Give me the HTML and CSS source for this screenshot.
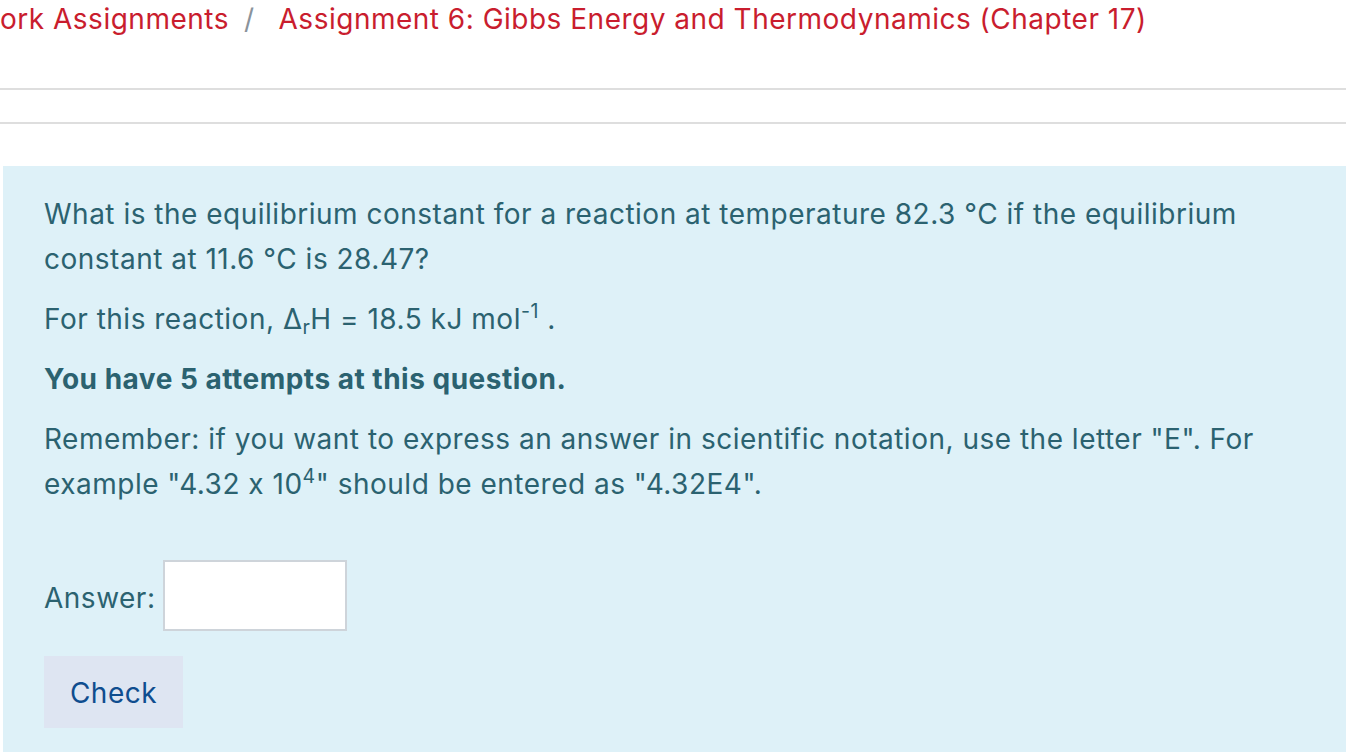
FILE: index.html
```html
<!DOCTYPE html>
<html>
<head>
<meta charset="utf-8">
<link rel="stylesheet" href="styles.css">
</head>
<body>
<nav class="breadcrumb">
  <a class="crumb" href="#">ork Assignments</a>
  <span class="sep">/</span>
  <a class="crumb" href="#">Assignment 6: Gibbs Energy and Thermodynamics (Chapter 17)</a>
</nav>
<div class="rules">
  <div class="rule"></div>
  <div class="rule"></div>
</div>
<div class="formulation">
  <p>What is the equilibrium constant for a reaction at temperature 82.3 °C if the equilibrium constant at 11.6 °C is 28.47?</p>
  <p>For this reaction, Δ<sub>r</sub>H = 18.5 kJ mol<sup>-1</sup> .</p>
  <p class="bold">You have 5 attempts at this question.</p>
  <p>Remember: if you want to express an answer in scientific notation, use the letter "E". For example "4.32 x 10<sup>4</sup>" should be entered as "4.32E4".</p>
  <div class="answer">
    <label for="ans">Answer:</label>
    <input id="ans" type="text">
  </div>
  <button class="check">Check</button>
</div>
</body>
</html>
```

FILE: styles.css
```css
html, body {
  margin: 0;
  padding: 0;
  background: #ffffff;
}
body {
  font-family: Inter, "Liberation Sans", sans-serif;
  font-size: 28px;
  letter-spacing: 0.5px;
  font-feature-settings: "calt" 0;
  overflow: hidden;
  height: 752px;
}
.breadcrumb {
  display: flex;
  align-items: center;
  height: 37px;
  white-space: nowrap;
}
.crumb {
  color: #c91d2e;
  text-decoration: none;
}
.sep {
  color: #8a939b;
  margin: 0 24px 0 15px;
}
.rules {
  padding-top: 51px;
}
.rule {
  height: 2px;
  background: #dedede;
}
.rule + .rule {
  margin-top: 32px;
}
.formulation {
  margin: 42px 0 0 3px;
  background: #def1f8;
  color: #2b6270;
  padding: 26px 41px 24px;
  height: 600px;
}
.formulation p {
  margin: 0 0 15px;
  line-height: 45px;
}
.formulation .bold {
  font-weight: 700;
}
sub, sup {
  font-size: 0.7em;
  line-height: 0;
  position: relative;
}
sub { vertical-align: baseline; top: 0.25em; }
sup { vertical-align: baseline; top: -0.55em; }
.answer {
  display: flex;
  align-items: center;
  gap: 8px;
  margin-top: 53px;
}
.answer label {
  position: relative;
  top: 2px;
}
.answer input {
  width: 184px;
  box-sizing: border-box;
  height: 71px;
  border: 2px solid #ced4da;
  background: #fff;
  margin: 0;
  font: inherit;
}
.check {
  display: block;
  margin-top: 25px;
  width: 139px;
  height: 72px;
  border: none;
  background: #dee5f2;
  color: #0f4d8f;
  font: inherit;
  letter-spacing: 0.5px;
  padding: 2px 0 0;
}
```
